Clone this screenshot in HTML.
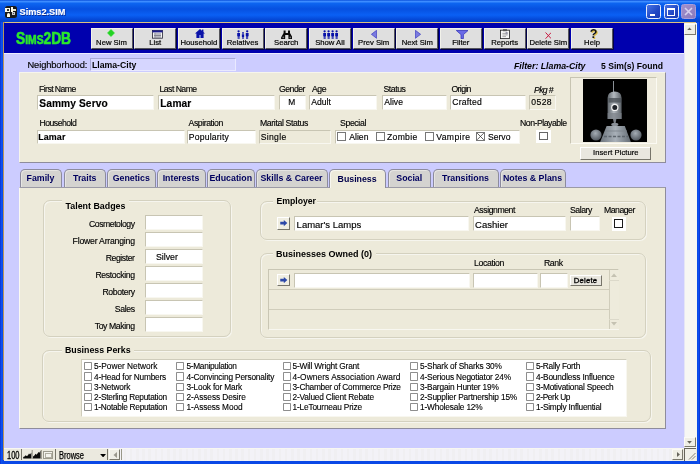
<!DOCTYPE html><html><head><meta charset="utf-8"><title>Sims2.SIM</title><style>
html,body{margin:0;padding:0;}
body{width:700px;height:464px;overflow:hidden;position:relative;background:#ccccff;font-family:"Liberation Sans",Arial,sans-serif;color:#000;}
div{position:absolute;box-sizing:border-box;}
.t{line-height:12px;height:12px;white-space:pre;color:#000;}
.l{letter-spacing:-0.45px;-webkit-text-stroke:0.14px #000;}
.f{-webkit-text-stroke:0.15px #000;background:#fff;border-top:1px solid #c8c5b3;border-left:1px solid #c8c5b3;border-bottom:1px solid #f8f7f0;border-right:1px solid #f8f7f0;overflow:hidden;}
.cb{background:#fff;border:1px solid #666;}
.btn{background:#e9e7df;border-top:1px solid #fff;border-left:1px solid #fff;border-right:1px solid #77756a;border-bottom:1px solid #77756a;}
.grp{border:1.3px solid #d4d1bf;border-radius:7px;box-shadow:1px 1px 0 #f6f5ee inset, 1px 1px 0 #f6f5ee;}
.tab{background:#d4d3d0;border:1.4px solid #8c8b9e;border-bottom:none;border-radius:5px 5px 0 0;box-shadow:inset 1px 1px 0 #e6e5e2;color:#00005e;font-weight:bold;text-align:center;font-size:8.8px;line-height:17.8px;white-space:pre;}
</style></head><body><div id="w" style="left:0;top:0;width:700px;height:464px;will-change:transform;overflow:hidden;">
<div style="left:0px;top:0px;width:700px;height:23px;background:linear-gradient(#0a50dc 0,#3c8cff 1.5px,#0c64f0 3.5px,#0650e0 9px,#0a60f4 15px,#0446d4 20px,#0040cc 23px);"></div>
<div style="left:0px;top:22px;width:700px;height:442px;background:linear-gradient(90deg,#0a2fd0 0,#0c50f0 1.5px,#0a48e6 3px,#0a48e6 697px,#0c50f0 698.5px,#0a2fd0 700px);"></div>
<div style="left:3px;top:22px;width:693px;height:1.3px;background:#dcc080;"></div>
<div style="left:3px;top:22px;width:1.5px;height:438px;background:#b8955a;"></div>
<div style="left:4px;top:23px;width:680px;height:425px;background:#ccccff;"></div>
<div style="left:4px;top:23px;width:680px;height:30.5px;background:#0000ae;"></div>
<div style="left:4px;top:53.3px;width:680px;height:1.2px;background:#ececff;"></div>
<div style="left:4.5px;top:5.8px;width:12px;height:11.8px;background:#1a1a1a;border-radius:2.5px;"></div>
<div style="left:5.3px;top:7.6px;width:4.6px;height:4px;background:#fffbe8;"></div>
<div style="left:6.8px;top:8.8px;width:1.8px;height:1.8px;background:#333;"></div>
<div style="left:11px;top:6.6px;width:2.4px;height:5px;background:#fffbe8;"></div>
<div style="left:13px;top:8.6px;width:2.6px;height:2.2px;background:#e8e4d0;"></div>
<div style="left:6.6px;top:12.6px;width:3.6px;height:4px;background:#fffbe8;border-radius:1.5px 1.5px 0 0;"></div>
<div style="left:12px;top:12px;width:3px;height:3px;background:#555;border:0.8px solid #ccc;"></div>
<div class="t" style="left:19.5px;top:6.1px;font-size:9.2px;font-weight:bold;color:#fff;text-shadow:0.6px 0.6px 0 #0a2a90;-webkit-text-stroke:0.15px #fff;">Sims2.SIM</div>
<div style="left:646px;top:4.3px;width:15px;height:15px;background:linear-gradient(135deg,#4a74e4,#2048c4 60%,#1a3cb4);border:1px solid #e8eefc;border-radius:2.5px;"></div>
<div style="left:663.5px;top:4.3px;width:15px;height:15px;background:linear-gradient(135deg,#4a74e4,#2048c4 60%,#1a3cb4);border:1px solid #e8eefc;border-radius:2.5px;"></div>
<div style="left:680.8px;top:4.3px;width:15px;height:15px;background:linear-gradient(135deg,#a090cc,#8a7abc);border:1px solid #a89cd8;border-radius:2.5px;"></div>
<div style="left:649.5px;top:13.5px;width:5px;height:2px;background:#fff;"></div>
<div style="left:667px;top:7.5px;width:8px;height:8px;border:1px solid #fff;border-top:2px solid #fff;"></div>
<svg style="position:absolute;left:683.8px;top:7.3px" width="9" height="9" viewBox="0 0 9 9"><path d="M1 1L8 8M8 1L1 8" stroke="#d6d0ee" stroke-width="1.6"/></svg>
<div class="t" id="logo" style="left:15.5px;top:30.2px;height:18px;line-height:18px;font-size:16px;font-weight:bold;color:#2be82b;transform-origin:0 50%;transform:scaleX(0.86);-webkit-text-stroke:0.6px #2be82b;">S<span style="font-size:12px">IMS</span>2DB</div>
<div class="btn" style="left:90.5px;top:28.2px;width:42px;height:20.4px;background:#dfdfdf;border-color:#f2f2ea #55555c #55555c #f2f2ea;box-shadow:0.7px 0.7px 0 #000020;"><span style="position:absolute;left:-10px;right:-10px;text-align:center;top:9.2px;font-size:7.7px;line-height:10px;white-space:pre;color:#000;-webkit-text-stroke:0.2px #000">New Sim</span></div>
<div class="btn" style="left:134.2px;top:28.2px;width:42px;height:20.4px;background:#dfdfdf;border-color:#f2f2ea #55555c #55555c #f2f2ea;box-shadow:0.7px 0.7px 0 #000020;"><span style="position:absolute;left:-10px;right:-10px;text-align:center;top:9.2px;font-size:7.7px;line-height:10px;white-space:pre;color:#000;-webkit-text-stroke:0.2px #000">List</span></div>
<div class="btn" style="left:177.9px;top:28.2px;width:42px;height:20.4px;background:#dfdfdf;border-color:#f2f2ea #55555c #55555c #f2f2ea;box-shadow:0.7px 0.7px 0 #000020;"><span style="position:absolute;left:-10px;right:-10px;text-align:center;top:9.2px;font-size:7.7px;line-height:10px;white-space:pre;color:#000;-webkit-text-stroke:0.2px #000">Household</span></div>
<div class="btn" style="left:221.5px;top:28.2px;width:42px;height:20.4px;background:#dfdfdf;border-color:#f2f2ea #55555c #55555c #f2f2ea;box-shadow:0.7px 0.7px 0 #000020;"><span style="position:absolute;left:-10px;right:-10px;text-align:center;top:9.2px;font-size:7.7px;line-height:10px;white-space:pre;color:#000;-webkit-text-stroke:0.2px #000">Relatives</span></div>
<div class="btn" style="left:265.2px;top:28.2px;width:42px;height:20.4px;background:#dfdfdf;border-color:#f2f2ea #55555c #55555c #f2f2ea;box-shadow:0.7px 0.7px 0 #000020;"><span style="position:absolute;left:-10px;right:-10px;text-align:center;top:9.2px;font-size:7.7px;line-height:10px;white-space:pre;color:#000;-webkit-text-stroke:0.2px #000">Search</span></div>
<div class="btn" style="left:308.9px;top:28.2px;width:42px;height:20.4px;background:#dfdfdf;border-color:#f2f2ea #55555c #55555c #f2f2ea;box-shadow:0.7px 0.7px 0 #000020;"><span style="position:absolute;left:-10px;right:-10px;text-align:center;top:9.2px;font-size:7.7px;line-height:10px;white-space:pre;color:#000;-webkit-text-stroke:0.2px #000">Show All</span></div>
<div class="btn" style="left:352.6px;top:28.2px;width:42px;height:20.4px;background:#dfdfdf;border-color:#f2f2ea #55555c #55555c #f2f2ea;box-shadow:0.7px 0.7px 0 #000020;"><span style="position:absolute;left:-10px;right:-10px;text-align:center;top:9.2px;font-size:7.7px;line-height:10px;white-space:pre;color:#000;-webkit-text-stroke:0.2px #000">Prev Sim</span></div>
<div class="btn" style="left:396.3px;top:28.2px;width:42px;height:20.4px;background:#dfdfdf;border-color:#f2f2ea #55555c #55555c #f2f2ea;box-shadow:0.7px 0.7px 0 #000020;"><span style="position:absolute;left:-10px;right:-10px;text-align:center;top:9.2px;font-size:7.7px;line-height:10px;white-space:pre;color:#000;-webkit-text-stroke:0.2px #000">Next Sim</span></div>
<div class="btn" style="left:439.9px;top:28.2px;width:42px;height:20.4px;background:#dfdfdf;border-color:#f2f2ea #55555c #55555c #f2f2ea;box-shadow:0.7px 0.7px 0 #000020;"><span style="position:absolute;left:-10px;right:-10px;text-align:center;top:9.2px;font-size:7.7px;line-height:10px;white-space:pre;color:#000;-webkit-text-stroke:0.2px #000">Filter</span></div>
<div class="btn" style="left:483.6px;top:28.2px;width:42px;height:20.4px;background:#dfdfdf;border-color:#f2f2ea #55555c #55555c #f2f2ea;box-shadow:0.7px 0.7px 0 #000020;"><span style="position:absolute;left:-10px;right:-10px;text-align:center;top:9.2px;font-size:7.7px;line-height:10px;white-space:pre;color:#000;-webkit-text-stroke:0.2px #000">Reports</span></div>
<div class="btn" style="left:527.3px;top:28.2px;width:42px;height:20.4px;background:#dfdfdf;border-color:#f2f2ea #55555c #55555c #f2f2ea;box-shadow:0.7px 0.7px 0 #000020;"><span style="position:absolute;left:-10px;right:-10px;text-align:center;top:9.2px;font-size:7.7px;line-height:10px;white-space:pre;color:#000;-webkit-text-stroke:0.2px #000">Delete Sim</span></div>
<div class="btn" style="left:571.0px;top:28.2px;width:42px;height:20.4px;background:#dfdfdf;border-color:#f2f2ea #55555c #55555c #f2f2ea;box-shadow:0.7px 0.7px 0 #000020;"><span style="position:absolute;left:-10px;right:-10px;text-align:center;top:9.2px;font-size:7.7px;line-height:10px;white-space:pre;color:#000;-webkit-text-stroke:0.2px #000">Help</span></div>
<svg style="position:absolute;left:107.4px;top:29.2px" width="8" height="8" viewBox="0 0 8 8"><path d="M4 0.3L7.7 4L4 7.7L0.3 4Z" fill="#22d222" stroke="#5fe65f" stroke-width="0.5"/></svg>
<svg style="position:absolute;left:151.6px;top:30px" width="11" height="8.6" viewBox="0 0 11 8.6"><rect x="0.4" y="0.4" width="10.2" height="7.8" fill="#f4f4f4" stroke="#223" stroke-width="0.8"/><rect x="0.4" y="0.4" width="10.2" height="2" fill="#1a1a8c"/><path d="M2 4H9M2 5.5H9M2 7H9" stroke="#556" stroke-width="0.7"/><path d="M3.2 2.6V8" stroke="#889" stroke-width="0.5"/></svg>
<svg style="position:absolute;left:195.4px;top:29.4px" width="10" height="9" viewBox="0 0 10 9"><path d="M5 0L10 4.6H8.6V9H1.4V4.6H0Z" fill="#0a12a8"/><rect x="7" y="0.6" width="1.4" height="2.6" fill="#0a12a8"/><rect x="4.2" y="6" width="1.6" height="3" fill="#8090e0"/></svg>
<svg style="position:absolute;left:236.6px;top:30.2px" width="12" height="9" viewBox="0 0 12 9"><circle cx="1.6" cy="1.3" r="1.15" fill="#0a12a8"/><path d="M0.20000000000000018 3H3.0V6.3H2.5V9H1.75V6.5H1.4500000000000002V9H0.7000000000000001V6.3H0.20000000000000018Z" fill="#0a12a8"/><g transform="translate(1.2,1.9) scale(0.8)"><circle cx="6" cy="1.3" r="1.15" fill="#0a12a8"/><path d="M4.6 3H7.4V6.3H6.9V9H6.15V6.5H5.85V9H5.1V6.3H4.6Z" fill="#0a12a8"/></g><circle cx="10.2" cy="1.3" r="1.15" fill="#0a12a8"/><path d="M8.799999999999999 3H11.6V6.3H11.1V9H10.35V6.5H10.049999999999999V9H9.299999999999999V6.3H8.799999999999999Z" fill="#0a12a8"/></svg>
<svg style="position:absolute;left:280.8px;top:29.8px" width="11.6" height="9.4" viewBox="0 0 11.6 9.4"><path d="M2.6 0.6H4.6V3H7V0.6H9V3L11.4 7.2A2 2 0 0 1 7.4 8.6V5H4.2V8.6A2 2 0 0 1 0.2 7.2L2.6 3Z" fill="#0a0a0a"/><circle cx="2.3" cy="7.3" r="0.9" fill="#777"/><circle cx="9.3" cy="7.3" r="0.9" fill="#777"/></svg>
<svg style="position:absolute;left:322.8px;top:30.2px" width="16" height="9" viewBox="0 0 16 9"><circle cx="1.6" cy="1.3" r="1.15" fill="#0a12a8"/><path d="M0.20000000000000018 3H3.0V6.3H2.5V9H1.75V6.5H1.4500000000000002V9H0.7000000000000001V6.3H0.20000000000000018Z" fill="#0a12a8"/><circle cx="5.6" cy="1.3" r="1.15" fill="#0a12a8"/><path d="M4.199999999999999 3H7.0V6.3H6.5V9H5.75V6.5H5.449999999999999V9H4.699999999999999V6.3H4.199999999999999Z" fill="#0a12a8"/><circle cx="9.6" cy="1.3" r="1.15" fill="#0a12a8"/><path d="M8.2 3H11.0V6.3H10.5V9H9.75V6.5H9.45V9H8.7V6.3H8.2Z" fill="#0a12a8"/><circle cx="13.6" cy="1.3" r="1.15" fill="#0a12a8"/><path d="M12.2 3H15.0V6.3H14.5V9H13.75V6.5H13.45V9H12.7V6.3H12.2Z" fill="#0a12a8"/></svg>
<svg style="position:absolute;left:371.4px;top:30.2px" width="6" height="8.6" viewBox="0 0 6 8.6"><path d="M5.6 0.3V8.3L0.4 4.3Z" fill="#7b7be0" stroke="#3c3cc0" stroke-width="0.7"/></svg>
<svg style="position:absolute;left:415.4px;top:30.2px" width="6" height="8.6" viewBox="0 0 6 8.6"><path d="M0.4 0.3V8.3L5.6 4.3Z" fill="#7b7be0" stroke="#3c3cc0" stroke-width="0.7"/></svg>
<svg style="position:absolute;left:455.8px;top:30.2px" width="12.4" height="9" viewBox="0 0 12.4 9"><path d="M0.3 0.5H12.1L7.4 4.6V8.7H5V4.6Z" fill="#6a6ae6" stroke="#2a2ab8" stroke-width="0.7"/></svg>
<svg style="position:absolute;left:499.6px;top:29.4px" width="10" height="10" viewBox="0 0 10 10"><rect x="0.5" y="1.2" width="9" height="8.4" fill="#f6f6f6" stroke="#222" stroke-width="0.8"/><rect x="3" y="0.2" width="4" height="2" fill="#555"/><path d="M2.4 4.4H7.6M2.4 6H7.6M2.4 7.6H6" stroke="#777" stroke-width="0.6"/><rect x="5.6" y="3" width="2" height="2.4" fill="#99a"/></svg>
<svg style="position:absolute;left:544.6px;top:31.8px" width="6.8" height="7.2" viewBox="0 0 7.6 7.8"><path d="M0.6 0.4L7 7.4M7 0.4L0.6 7.4" stroke="#c81840" stroke-width="1.1" fill="none"/></svg>
<div class="t" style="left:589.2px;top:28.2px;width:9px;height:13px;line-height:13px;font-size:12.5px;font-weight:bold;color:#111;text-shadow:0.8px 0.8px 0 #e0c040;text-align:center">?</div>
<div style="left:683.5px;top:23px;width:13px;height:425px;background:linear-gradient(90deg,#dcdcf8 0,#f7f7f3 1.5px);"></div>
<div style="left:684.3px;top:23.5px;width:11.4px;height:11px;background:#efeee5;border:1px solid #fbfaf5;border-right-color:#7a786c;border-bottom-color:#7a786c;"></div>
<svg style="position:absolute;left:687.4px;top:27.2px" width="5" height="3.2" viewBox="0 0 6 4"><path d="M0 4L3 0.5L6 4Z" fill="#66645a"/></svg>
<div style="left:684.3px;top:437.4px;width:11.4px;height:10px;background:#efeee5;border:1px solid #fbfaf5;border-right-color:#7a786c;border-bottom-color:#7a786c;"></div>
<svg style="position:absolute;left:687.4px;top:441px" width="5" height="3.2" viewBox="0 0 6 4"><path d="M0 0L3 3.5L6 0Z" fill="#66645a"/></svg>
<div style="left:4px;top:448px;width:692.5px;height:12.6px;background:#ebe9df;"></div>
<div style="left:119px;top:448px;width:553px;height:12.6px;background:#f0eff2;background-image:repeating-linear-gradient(90deg,rgba(255,255,255,0.0) 0,rgba(255,255,255,0) 1px,#f3f2f7 1px,#f3f2f7 4.6px,rgba(0,0,0,0) 4.6px,rgba(0,0,0,0) 6.2px);"></div>
<div style="left:4px;top:448px;width:692px;height:1px;background:#f8f7f2;"></div>
<div class="t" style="left:7px;top:449.5px;font-size:10px;transform-origin:0 50%;transform:scaleX(0.75);-webkit-text-stroke:0.3px #000">100</div>
<div style="left:21.2px;top:449px;width:1px;height:11px;background:#77756a;"></div>
<svg style="position:absolute;left:23px;top:450px" width="18.5" height="9" viewBox="0 0 18.5 9"><path d="M0.2 8.5V7L1.5 6.6L2.6 5.2L3.6 6L4.8 5.6L6 3.6L7 4.4L8.4 2.6V8.5Z" fill="#0a0a0a"/><path d="M10 8.5V6.4L11.4 5.6L12.6 3.8L13.6 4.8L15.6 2L16.4 2.8L17.6 0.6V8.5Z" fill="#0a0a0a"/><path d="M9.2 0V9M18.3 0V9" stroke="#77756a" stroke-width="0.8"/></svg>
<div style="left:43px;top:450.8px;width:10px;height:8px;border:1px solid #9c9a8e;background:#f4f3ee;"></div>
<div style="left:45px;top:453px;width:7px;height:5px;border:1px solid #b0aea2;"></div>
<div style="left:55px;top:449px;width:1px;height:11px;background:#77756a;"></div>
<div class="t" style="left:58.8px;top:449.5px;font-size:10px;transform-origin:0 50%;transform:scaleX(0.75);-webkit-text-stroke:0.25px #000">Browse</div>
<svg style="position:absolute;left:99.6px;top:454px" width="6.2" height="3.4" viewBox="0 0 7 4"><path d="M0 0H7L3.5 4Z" fill="#000"/></svg>
<div style="left:107.3px;top:449px;width:1px;height:11px;background:#77756a;"></div>
<div style="left:120.6px;top:449px;width:1px;height:11px;background:#99978a;"></div>
<div style="left:108.8px;top:448.8px;width:11.6px;height:11.2px;background:#efeee5;border:1px solid #fbfaf5;border-right-color:#7a786c;border-bottom-color:#7a786c;"></div>
<svg style="position:absolute;left:112.5px;top:451.5px" width="4" height="6" viewBox="0 0 4 6"><path d="M4 0L0.5 3L4 6Z" fill="#9a988c"/></svg>
<div style="left:672.4px;top:448.6px;width:11px;height:11px;background:#efeee5;border:1px solid #fbfaf5;border-right-color:#7a786c;border-bottom-color:#7a786c;"></div>
<svg style="position:absolute;left:676.6px;top:451.6px" width="3.4" height="5" viewBox="0 0 4 6"><path d="M0 0L3.5 3L0 6Z" fill="#66645a"/></svg>
<div style="left:683.6px;top:447.6px;width:12.9px;height:13px;background:#f1f0e8;border-left:1.2px solid #66645a;border-top:1.2px solid #66645a;"></div>
<svg style="position:absolute;left:688px;top:452px" width="8" height="8" viewBox="0 0 8 8"><path d="M7.5 1L1 7.5M7.5 4L4 7.5" stroke="#77756a" stroke-width="0.9"/></svg>
<div class="t" style="left:27.5px;top:59.2px;font-size:9.3px;letter-spacing:-0.1px;-webkit-text-stroke:0.15px #000">Neighborhood:</div>
<div style="left:89.5px;top:57.5px;width:146.5px;height:13.5px;background:#d6d6ff;border:1px solid #a9a9d8;border-right-color:#e9e9ff;border-bottom-color:#e9e9ff;"></div>
<div class="t" style="left:92px;top:59.2px;font-size:8.7px;font-weight:bold">Llama-City</div>
<div class="t" style="left:514px;top:60.099999999999994px;font-size:8.75px;font-weight:bold;font-style:italic">Filter: Llama-City</div>
<div class="t" style="left:601px;top:60.099999999999994px;font-size:8.58px;font-weight:bold">5 Sim(s) Found</div>
<div style="left:18.6px;top:72.2px;width:647.4px;height:90.4px;background:#edeada;border-top:0.6px solid #f6f5ec;border-left:1px solid #f6f5ec;border-right:1px solid #8e8c9c;border-bottom:1px solid #8e8c9c;"></div>
<div class="t l" style="left:39px;top:82.6px;font-size:8.7px;;letter-spacing:-0.574px">First Name</div>
<div class="t l" style="left:159.5px;top:82.6px;font-size:8.7px;;letter-spacing:-0.541px">Last Name</div>
<div class="t l" style="left:279px;top:82.6px;font-size:8.7px;;letter-spacing:-0.503px">Gender</div>
<div class="t l" style="left:312px;top:82.6px;font-size:8.7px;;letter-spacing:-0.494px">Age</div>
<div class="t l" style="left:383.5px;top:82.6px;font-size:8.7px;;letter-spacing:-0.444px">Status</div>
<div class="t l" style="left:451.5px;top:82.6px;font-size:8.7px;;letter-spacing:-0.651px">Origin</div>
<div class="t l" style="left:534px;top:84.0px;font-size:8.7px;font-style:italic;letter-spacing:-0.650px">Pkg #</div>
<div class="f" style="left:36.5px;top:94.9px;width:117px;height:15.1px;"><span style="position:absolute;left:1.8px;top:-0.8px;line-height:15.1px;font-size:10.2px;white-space:pre;font-weight:bold;letter-spacing:0.1px;top:-0.3px">Sammy Servo</span></div>
<div class="f" style="left:157.5px;top:94.9px;width:117.5px;height:15.1px;"><span style="position:absolute;left:1.8px;top:-0.8px;line-height:15.1px;font-size:10.2px;white-space:pre;font-weight:bold;letter-spacing:0.1px;top:-0.3px">Lamar</span></div>
<div class="f" style="left:279px;top:94.9px;width:26.5px;height:15.1px;"><span style="position:absolute;left:8.3px;top:-0.8px;line-height:15.1px;font-size:8.4px;white-space:pre;">M</span></div>
<div class="f" style="left:309px;top:94.9px;width:68px;height:15.1px;"><span style="position:absolute;left:1.3px;top:-0.8px;line-height:15.1px;font-size:8.6px;white-space:pre;">Adult</span></div>
<div class="f" style="left:382px;top:94.9px;width:65px;height:15.1px;"><span style="position:absolute;left:1.3px;top:-0.8px;line-height:15.1px;font-size:8.6px;white-space:pre;">Alive</span></div>
<div class="f" style="left:450px;top:94.9px;width:76px;height:15.1px;"><span style="position:absolute;left:1.3px;top:-0.8px;line-height:15.1px;font-size:8.6px;white-space:pre;letter-spacing:0.2px">Crafted</span></div>
<div class="f" style="left:529px;top:94.9px;width:27px;height:15.1px;background:#edeada"><span style="position:absolute;left:1.3px;top:-0.8px;line-height:15.1px;font-size:8.6px;white-space:pre;letter-spacing:0.4px">0528</span></div>
<div class="t l" style="left:39.5px;top:117.1px;font-size:8.7px;;letter-spacing:-0.522px">Household</div>
<div class="t l" style="left:188.5px;top:117.1px;font-size:8.7px;;letter-spacing:-0.419px">Aspiration</div>
<div class="t l" style="left:260px;top:117.1px;font-size:8.7px;;letter-spacing:-0.363px">Marital Status</div>
<div class="t l" style="left:340px;top:117.1px;font-size:8.7px;;letter-spacing:-0.362px">Special</div>
<div class="t l" style="left:520px;top:117.1px;font-size:8.7px;;letter-spacing:-0.469px">Non-Playable</div>
<div class="f" style="left:36.5px;top:129.5px;width:148px;height:14px;"><span style="position:absolute;left:0.8px;top:-0.8px;line-height:14px;font-size:8.9px;white-space:pre;font-weight:bold;letter-spacing:0.1px">Lamar</span></div>
<div class="f" style="left:187px;top:129.5px;width:68.5px;height:14px;"><span style="position:absolute;left:0.8px;top:-0.8px;line-height:14px;font-size:8.6px;white-space:pre;letter-spacing:0.2px">Popularity</span></div>
<div class="f" style="left:259px;top:129.5px;width:71.5px;height:14px;background:#edeada"><span style="position:absolute;left:0.8px;top:-0.8px;line-height:14px;font-size:8.6px;white-space:pre;letter-spacing:0.3px">Single</span></div>
<div class="f" style="left:335px;top:129.5px;width:184.5px;height:14px;"></div>
<div class="cb" style="left:337.2px;top:132.3px;width:8.9px;height:8.9px;border-color:#777;"></div>
<div class="t" style="left:349.3px;top:130.8px;font-size:8.6px;letter-spacing:0px;-webkit-text-stroke:0.15px #000">Alien</div>
<div class="cb" style="left:375.7px;top:132.3px;width:8.9px;height:8.9px;border-color:#777;"></div>
<div class="t" style="left:387px;top:130.8px;font-size:8.6px;letter-spacing:0.3px;-webkit-text-stroke:0.15px #000">Zombie</div>
<div class="cb" style="left:425.0px;top:132.3px;width:8.9px;height:8.9px;border-color:#777;"></div>
<div class="t" style="left:436.2px;top:130.8px;font-size:8.6px;letter-spacing:0.4px;-webkit-text-stroke:0.15px #000">Vampire</div>
<div class="cb" style="left:475.7px;top:132.3px;width:8.9px;height:8.9px;border-color:#777;"><svg width="8.9" height="8.9" viewBox="0 0 8 8" style="position:absolute;left:-1px;top:-1px"><path d="M1 1L7 7M7 1L1 7" stroke="#333" stroke-width="0.7" fill="none"/></svg></div>
<div class="t" style="left:488px;top:130.8px;font-size:8.6px;letter-spacing:0px;-webkit-text-stroke:0.15px #000">Servo</div>
<div style="left:536.4px;top:129.8px;width:15px;height:13.4px;background:#fff;"></div>
<div class="cb" style="left:539.3px;top:131.8px;width:8.5px;height:8.5px;"></div>
<div style="left:570.4px;top:77px;width:87.1px;height:67px;background:#efecdf;border:1px solid #c7c4b2;border-right-color:#fbfaf3;border-bottom-color:#fbfaf3;"></div>
<div style="left:582.5px;top:79px;width:64.5px;height:63px;background:#000;"></div>
<svg style="position:absolute;left:582.5px;top:79px" width="64.5" height="63.3" viewBox="0 0 64.5 63.3">
<defs>
<linearGradient id="gh" x1="0" x2="1"><stop offset="0" stop-color="#60666c"/><stop offset="0.45" stop-color="#b4bac0"/><stop offset="1" stop-color="#5a6066"/></linearGradient>
<linearGradient id="gb" x1="0" x2="1"><stop offset="0" stop-color="#6c747c"/><stop offset="0.5" stop-color="#a8b0b8"/><stop offset="1" stop-color="#646c74"/></linearGradient>
<radialGradient id="gs" cx="0.45" cy="0.35" r="0.7"><stop offset="0" stop-color="#a4acb4"/><stop offset="1" stop-color="#4a5058"/></radialGradient>
</defs>
<rect width="64.5" height="63.3" fill="#000"/>
<rect x="30" y="2" width="1" height="11" fill="#8a9096"/>
<path d="M24.6 40V19Q24.6 12.4 31.6 12.4Q38.6 12.4 38.6 19V40Z" fill="url(#gh)"/>
<rect x="25.5" y="19" width="12.4" height="4.6" fill="#4a5056" opacity="0.8"/>
<rect x="24.6" y="34" width="14" height="6" fill="#7a8088" opacity="0.7"/>
<circle cx="31.8" cy="28.4" r="3.1" fill="#20242a" stroke="#f4f4f4" stroke-width="1.2"/>
<path d="M30 40H33.4L32.6 44H30.8Z" fill="#7a8088"/>
<ellipse cx="31.8" cy="45.4" rx="3.6" ry="1.6" fill="#8a9098"/>
<circle cx="13" cy="56" r="5.6" fill="url(#gs)"/>
<circle cx="53" cy="56" r="5.6" fill="url(#gs)"/>
<path d="M23.6 47H41.8L48 63.3H17Z" fill="url(#gb)"/>
<path d="M22 52H44" stroke="#7a828a" stroke-width="0.8"/>
<path d="M21 57.5H45" stroke="#5e666e" stroke-width="1.4" stroke-dasharray="3 1.5"/>
</svg>
<div class="btn" style="left:580.3px;top:147px;width:71px;height:12.8px;"><span style="position:absolute;left:0;right:0;text-align:center;top:0;line-height:10.8px;font-size:7.6px;-webkit-text-stroke:0.2px #000;letter-spacing:0.05px">Insert Picture</span></div>
<div style="left:18.6px;top:186.5px;width:647.4px;height:242.2px;background:#edeada;border-top:1px solid #9b9aa6;border-left:1px solid #fbfaf3;border-right:1px solid #8e8c9c;border-bottom:1px solid #8e8c9c;"></div>
<div class="tab" style="left:19.5px;top:169.3px;width:42.0px;height:17.5px;">Family</div>
<div class="tab" style="left:63.5px;top:169.3px;width:42.5px;height:17.5px;">Traits</div>
<div class="tab" style="left:107.0px;top:169.3px;width:48.5px;height:17.5px;">Genetics</div>
<div class="tab" style="left:156.5px;top:169.3px;width:49.0px;height:17.5px;">Interests</div>
<div class="tab" style="left:206.5px;top:169.3px;width:48.5px;height:17.5px;">Education</div>
<div class="tab" style="left:255.5px;top:169.3px;width:72.0px;height:17.5px;">Skills &amp; Career</div>
<div class="tab" style="left:328.5px;top:168.5px;width:57.2px;height:19.5px;background:#edeada;line-height:19px;color:#00004a;box-shadow:inset 1px 1px 0 #f8f7f0;">Business</div>
<div class="tab" style="left:387.5px;top:169.3px;width:43.5px;height:17.5px;">Social</div>
<div class="tab" style="left:432.5px;top:169.3px;width:66.0px;height:17.5px;">Transitions</div>
<div class="tab" style="left:499.5px;top:169.3px;width:66.0px;height:17.5px;">Notes &amp; Plans</div>
<div class="grp" style="left:43px;top:200.3px;width:187.5px;height:136.7px;"></div>
<div style="left:62px;top:199px;width:67px;height:12px;background:#edeada;"></div>
<div class="t" style="left:65.5px;top:199.5px;font-size:8.87px;font-weight:bold">Talent Badges</div>
<div class="t l" style="right:565px;top:217.8px;font-size:8.7px;;letter-spacing:-0.470px;margin-right:0.470px">Cosmetology</div>
<div class="f" style="left:144.5px;top:215.4px;width:58px;height:14.8px;"></div>
<div class="t l" style="right:565px;top:234.8px;font-size:8.7px;;letter-spacing:-0.217px;margin-right:0.217px">Flower Arranging</div>
<div class="f" style="left:144.5px;top:232.4px;width:58px;height:14.8px;"></div>
<div class="t l" style="right:565px;top:251.8px;font-size:8.7px;;letter-spacing:-0.437px;margin-right:0.437px">Register</div>
<div class="f" style="left:144.5px;top:249.4px;width:58px;height:14.8px;"><span style="position:absolute;left:10.4px;top:-0.8px;line-height:14.8px;font-size:8.8px;white-space:pre;">Silver</span></div>
<div class="t l" style="right:565px;top:268.8px;font-size:8.7px;;letter-spacing:-0.384px;margin-right:0.384px">Restocking</div>
<div class="f" style="left:144.5px;top:266.4px;width:58px;height:14.8px;"></div>
<div class="t l" style="right:565px;top:285.8px;font-size:8.7px;;letter-spacing:-0.388px;margin-right:0.388px">Robotery</div>
<div class="f" style="left:144.5px;top:283.4px;width:58px;height:14.8px;"></div>
<div class="t l" style="right:565px;top:302.8px;font-size:8.7px;;letter-spacing:-0.373px;margin-right:0.373px">Sales</div>
<div class="f" style="left:144.5px;top:300.4px;width:58px;height:14.8px;"></div>
<div class="t l" style="right:565px;top:319.8px;font-size:8.7px;;letter-spacing:-0.410px;margin-right:0.410px">Toy Making</div>
<div class="f" style="left:144.5px;top:317.4px;width:58px;height:14.8px;"></div>
<div class="grp" style="left:259.6px;top:201.2px;width:386.4px;height:38.8px;"></div>
<div style="left:273px;top:196px;width:44px;height:12px;background:#edeada;"></div>
<div class="t" style="left:276.4px;top:195.3px;font-size:8.7px;font-weight:bold">Employer</div>
<div class="t l" style="left:474px;top:203.9px;font-size:8.7px;;letter-spacing:-0.446px">Assignment</div>
<div class="t l" style="left:570px;top:203.9px;font-size:8.7px;;letter-spacing:-0.460px">Salary</div>
<div class="t l" style="left:604px;top:203.9px;font-size:8.7px;;letter-spacing:-0.491px">Manager</div>
<div class="btn" style="left:277.4px;top:217.3px;width:12.5px;height:12.4px;background:#f0eee2;"><svg style="position:absolute;left:1.6px;top:2.2px" width="7.6" height="6.2" viewBox="0 0 8 7"><path d="M0 2H4V0L8 3.5L4 7V5H0Z" fill="#2c48a8"/></svg></div>
<div class="f" style="left:293.8px;top:216.4px;width:175.2px;height:15px;"><span style="position:absolute;left:1.8px;top:-0.8px;line-height:15px;font-size:9.5px;white-space:pre;">Lamar's Lamps</span></div>
<div class="f" style="left:472.5px;top:216.4px;width:93px;height:15px;"><span style="position:absolute;left:1.5999999999999999px;top:-0.8px;line-height:15px;font-size:9.5px;white-space:pre;">Cashier</span></div>
<div class="f" style="left:569.5px;top:216.4px;width:30px;height:15px;"></div>
<div style="left:612.2px;top:216.6px;width:13.5px;height:14px;background:#fff;"></div>
<div style="left:614px;top:218.7px;width:9.2px;height:9.2px;background:#fff;border:1.3px solid #1a1a1a;"></div>
<div class="grp" style="left:259.6px;top:253.2px;width:386.4px;height:84.8px;"></div>
<div style="left:273px;top:247px;width:103px;height:12px;background:#edeada;"></div>
<div class="t" style="left:276px;top:247.7px;font-size:9.0px;font-weight:bold">Businesses Owned (0)</div>
<div class="t l" style="left:474px;top:257.1px;font-size:8.7px;;letter-spacing:-0.362px">Location</div>
<div class="t l" style="left:544px;top:257.1px;font-size:8.7px;;letter-spacing:-0.428px">Rank</div>
<div style="left:268px;top:269px;width:351px;height:60.5px;border:1px solid #c9c6b4;border-right-color:#f8f7f0;border-bottom-color:#f8f7f0;"></div>
<div style="left:269px;top:289.3px;width:340px;height:1px;background:#d0cdbb;"></div>
<div style="left:269px;top:309.3px;width:340px;height:1px;background:#d0cdbb;"></div>
<div style="left:609px;top:270px;width:9.5px;height:58.5px;background:#eeebdc;border-left:1px solid #d0cdbb;"></div>
<svg style="position:absolute;left:611px;top:273px" width="6" height="4" viewBox="0 0 6 4"><path d="M0 4L3 0.5L6 4Z" fill="#c5c2b2"/></svg>
<svg style="position:absolute;left:611px;top:322px" width="6" height="4" viewBox="0 0 6 4"><path d="M0 0L3 3.5L6 0Z" fill="#c5c2b2"/></svg>
<div style="left:609px;top:279.5px;width:9.5px;height:1px;background:#dcd9ca;"></div>
<div style="left:609px;top:318.5px;width:9.5px;height:1px;background:#dcd9ca;"></div>
<div class="btn" style="left:277.4px;top:273.6px;width:12.5px;height:12.4px;background:#f0eee2;"><svg style="position:absolute;left:1.6px;top:2.2px" width="7.6" height="6.2" viewBox="0 0 8 7"><path d="M0 2H4V0L8 3.5L4 7V5H0Z" fill="#2c48a8"/></svg></div>
<div class="f" style="left:294px;top:272.5px;width:176px;height:15px;"></div>
<div class="f" style="left:472.5px;top:272.5px;width:65px;height:15px;"></div>
<div class="f" style="left:540px;top:272.5px;width:27.5px;height:15px;"></div>
<div class="btn" style="left:569.5px;top:275px;width:32px;height:11.4px;"><span style="position:absolute;left:0;right:0;text-align:center;top:0;line-height:9.6px;font-size:7.7px;-webkit-text-stroke:0.3px #000;letter-spacing:0.2px">Delete</span></div>
<div class="grp" style="left:42.4px;top:350px;width:609.1px;height:71.5px;"></div>
<div style="left:62px;top:344px;width:72px;height:12px;background:#edeada;"></div>
<div class="t" style="left:65px;top:344px;font-size:8.8px;font-weight:bold">Business Perks</div>
<div style="left:81px;top:359px;width:546px;height:57.5px;background:#fff;border:1px solid #cfccbb;border-right-color:#f8f7f0;border-bottom-color:#f8f7f0;"></div>
<div class="cb" style="left:83.5px;top:362.1px;width:8.3px;height:8.3px;border-color:#8e8e8e;border-radius:0.8px;"></div>
<div class="t" style="left:94px;top:360.3px;font-size:8.3px;letter-spacing:-0.017px;-webkit-text-stroke:0.12px #000">5-Power Network</div>
<div class="cb" style="left:83.5px;top:372.35px;width:8.3px;height:8.3px;border-color:#8e8e8e;border-radius:0.8px;"></div>
<div class="t" style="left:94px;top:370.55px;font-size:8.3px;letter-spacing:-0.170px;-webkit-text-stroke:0.12px #000">4-Head for Numbers</div>
<div class="cb" style="left:83.5px;top:382.6px;width:8.3px;height:8.3px;border-color:#8e8e8e;border-radius:0.8px;"></div>
<div class="t" style="left:94px;top:380.8px;font-size:8.3px;letter-spacing:-0.170px;-webkit-text-stroke:0.12px #000">3-Network</div>
<div class="cb" style="left:83.5px;top:392.85px;width:8.3px;height:8.3px;border-color:#8e8e8e;border-radius:0.8px;"></div>
<div class="t" style="left:94px;top:391.05px;font-size:8.3px;letter-spacing:-0.237px;-webkit-text-stroke:0.12px #000">2-Sterling Reputation</div>
<div class="cb" style="left:83.5px;top:403.1px;width:8.3px;height:8.3px;border-color:#8e8e8e;border-radius:0.8px;"></div>
<div class="t" style="left:94px;top:401.3px;font-size:8.3px;letter-spacing:-0.270px;-webkit-text-stroke:0.12px #000">1-Notable Reputation</div>
<div class="cb" style="left:176px;top:362.1px;width:8.3px;height:8.3px;border-color:#8e8e8e;border-radius:0.8px;"></div>
<div class="t" style="left:186.5px;top:360.3px;font-size:8.3px;letter-spacing:-0.306px;-webkit-text-stroke:0.12px #000">5-Manipulation</div>
<div class="cb" style="left:176px;top:372.35px;width:8.3px;height:8.3px;border-color:#8e8e8e;border-radius:0.8px;"></div>
<div class="t" style="left:186.5px;top:370.55px;font-size:8.3px;letter-spacing:-0.170px;-webkit-text-stroke:0.12px #000">4-Convincing Personality</div>
<div class="cb" style="left:176px;top:382.6px;width:8.3px;height:8.3px;border-color:#8e8e8e;border-radius:0.8px;"></div>
<div class="t" style="left:186.5px;top:380.8px;font-size:8.3px;letter-spacing:-0.170px;-webkit-text-stroke:0.12px #000">3-Look for Mark</div>
<div class="cb" style="left:176px;top:392.85px;width:8.3px;height:8.3px;border-color:#8e8e8e;border-radius:0.8px;"></div>
<div class="t" style="left:186.5px;top:391.05px;font-size:8.3px;letter-spacing:-0.070px;-webkit-text-stroke:0.12px #000">2-Assess Desire</div>
<div class="cb" style="left:176px;top:403.1px;width:8.3px;height:8.3px;border-color:#8e8e8e;border-radius:0.8px;"></div>
<div class="t" style="left:186.5px;top:401.3px;font-size:8.3px;letter-spacing:-0.093px;-webkit-text-stroke:0.12px #000">1-Assess Mood</div>
<div class="cb" style="left:282.5px;top:362.1px;width:8.3px;height:8.3px;border-color:#8e8e8e;border-radius:0.8px;"></div>
<div class="t" style="left:292.5px;top:360.3px;font-size:8.3px;letter-spacing:-0.170px;-webkit-text-stroke:0.12px #000">5-Will Wright Grant</div>
<div class="cb" style="left:282.5px;top:372.35px;width:8.3px;height:8.3px;border-color:#8e8e8e;border-radius:0.8px;"></div>
<div class="t" style="left:292.5px;top:370.55px;font-size:8.3px;letter-spacing:0.099px;-webkit-text-stroke:0.12px #000">4-Owners Association Award</div>
<div class="cb" style="left:282.5px;top:382.6px;width:8.3px;height:8.3px;border-color:#8e8e8e;border-radius:0.8px;"></div>
<div class="t" style="left:292.5px;top:380.8px;font-size:8.3px;letter-spacing:-0.244px;-webkit-text-stroke:0.12px #000">3-Chamber of Commerce Prize</div>
<div class="cb" style="left:282.5px;top:392.85px;width:8.3px;height:8.3px;border-color:#8e8e8e;border-radius:0.8px;"></div>
<div class="t" style="left:292.5px;top:391.05px;font-size:8.3px;letter-spacing:-0.170px;-webkit-text-stroke:0.12px #000">2-Valued Client Rebate</div>
<div class="cb" style="left:282.5px;top:403.1px;width:8.3px;height:8.3px;border-color:#8e8e8e;border-radius:0.8px;"></div>
<div class="t" style="left:292.5px;top:401.3px;font-size:8.3px;letter-spacing:-0.170px;-webkit-text-stroke:0.12px #000">1-LeTourneau Prize</div>
<div class="cb" style="left:410px;top:362.1px;width:8.3px;height:8.3px;border-color:#8e8e8e;border-radius:0.8px;"></div>
<div class="t" style="left:420px;top:360.3px;font-size:8.3px;letter-spacing:-0.170px;-webkit-text-stroke:0.12px #000">5-Shark of Sharks 30%</div>
<div class="cb" style="left:410px;top:372.35px;width:8.3px;height:8.3px;border-color:#8e8e8e;border-radius:0.8px;"></div>
<div class="t" style="left:420px;top:370.55px;font-size:8.3px;letter-spacing:-0.170px;-webkit-text-stroke:0.12px #000">4-Serious Negotiator 24%</div>
<div class="cb" style="left:410px;top:382.6px;width:8.3px;height:8.3px;border-color:#8e8e8e;border-radius:0.8px;"></div>
<div class="t" style="left:420px;top:380.8px;font-size:8.3px;letter-spacing:-0.170px;-webkit-text-stroke:0.12px #000">3-Bargain Hunter 19%</div>
<div class="cb" style="left:410px;top:392.85px;width:8.3px;height:8.3px;border-color:#8e8e8e;border-radius:0.8px;"></div>
<div class="t" style="left:420px;top:391.05px;font-size:8.3px;letter-spacing:-0.170px;-webkit-text-stroke:0.12px #000">2-Supplier Partnership 15%</div>
<div class="cb" style="left:410px;top:403.1px;width:8.3px;height:8.3px;border-color:#8e8e8e;border-radius:0.8px;"></div>
<div class="t" style="left:420px;top:401.3px;font-size:8.3px;letter-spacing:-0.170px;-webkit-text-stroke:0.12px #000">1-Wholesale 12%</div>
<div class="cb" style="left:526px;top:362.1px;width:8.3px;height:8.3px;border-color:#8e8e8e;border-radius:0.8px;"></div>
<div class="t" style="left:536px;top:360.3px;font-size:8.3px;letter-spacing:-0.270px;-webkit-text-stroke:0.12px #000">5-Rally Forth</div>
<div class="cb" style="left:526px;top:372.35px;width:8.3px;height:8.3px;border-color:#8e8e8e;border-radius:0.8px;"></div>
<div class="t" style="left:536px;top:370.55px;font-size:8.3px;letter-spacing:-0.170px;-webkit-text-stroke:0.12px #000">4-Boundless Influence</div>
<div class="cb" style="left:526px;top:382.6px;width:8.3px;height:8.3px;border-color:#8e8e8e;border-radius:0.8px;"></div>
<div class="t" style="left:536px;top:380.8px;font-size:8.3px;letter-spacing:-0.218px;-webkit-text-stroke:0.12px #000">3-Motivational Speech</div>
<div class="cb" style="left:526px;top:392.85px;width:8.3px;height:8.3px;border-color:#8e8e8e;border-radius:0.8px;"></div>
<div class="t" style="left:536px;top:391.05px;font-size:8.3px;letter-spacing:-0.370px;-webkit-text-stroke:0.12px #000">2-Perk Up</div>
<div class="cb" style="left:526px;top:403.1px;width:8.3px;height:8.3px;border-color:#8e8e8e;border-radius:0.8px;"></div>
<div class="t" style="left:536px;top:401.3px;font-size:8.3px;letter-spacing:-0.235px;-webkit-text-stroke:0.12px #000">1-Simply Influential</div>
</div></body></html>
